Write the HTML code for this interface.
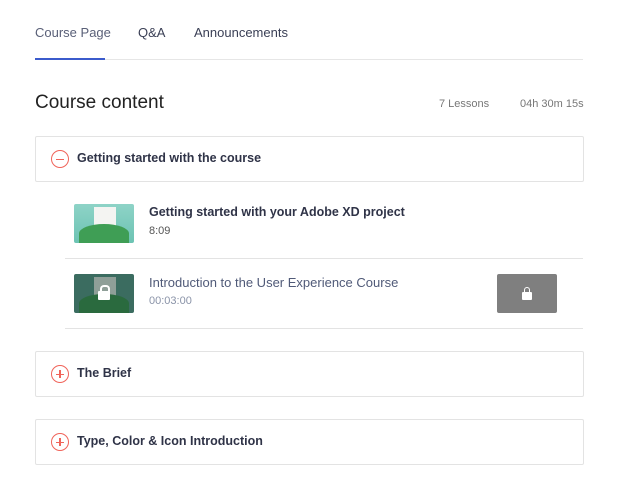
<!DOCTYPE html>
<html><head><style>
body{margin:0;width:643px;height:500px;background:#fff;font-family:"Liberation Sans",sans-serif;position:relative;overflow:hidden}
.a{position:absolute}
.tab{font-size:13px;color:#3a3f55;top:25px}
.box{position:absolute;left:35px;width:547px;height:44px;border:1px solid #e3e3e3;border-radius:2px}
.box .ic{position:absolute;left:15px;top:13px;width:16px;height:16px;border:1px solid #f0645a;border-radius:50%}
.box .ic:before{content:"";position:absolute;left:4px;top:7.5px;width:8px;height:1.2px;background:#f0645a}
.box .ic.p:after{content:"";position:absolute;left:7.4px;top:4px;width:1.2px;height:8px;background:#f0645a}
.box .t{position:absolute;left:41px;top:14px;font-size:12.5px;font-weight:bold;color:#2f3347}
.th{position:absolute;left:74px;width:60px;height:39px;border-radius:2px;overflow:hidden}
.line{position:absolute;left:65px;width:518px;height:1px;background:#e3e3e3}
</style></head><body>
<div class="a tab" style="left:35px;color:#5a6078">Course Page</div>
<div class="a tab" style="left:138px">Q&amp;A</div>
<div class="a tab" style="left:194px">Announcements</div>
<div class="a" style="left:35px;top:59px;width:548px;height:1px;background:#e6e6e6"></div>
<div class="a" style="left:35px;top:58px;width:70px;height:2px;background:#3b5bcc"></div>
<div class="a" style="left:35px;top:92px;font-size:19px;color:#222">Course content</div>
<div class="a" style="left:439px;top:98px;font-size:11px;color:#777">7 Lessons</div>
<div class="a" style="left:520px;top:98px;font-size:11px;color:#777">04h 30m 15s</div>
<div class="box" style="top:136px"><div class="ic"></div><div class="t">Getting started with the course</div></div>
<div class="th" style="top:204px;background:linear-gradient(#8ed3c7,#6cc3b3)"><div class="a" style="left:20px;top:3px;width:22px;height:20px;background:#f4f4f2"></div><div class="a" style="left:5px;top:20px;width:50px;height:19px;background:#3f9e55;border-radius:50% 50% 0 0"></div></div>
<div class="a" style="left:149px;top:205px;font-size:12.5px;font-weight:bold;color:#2f3347">Getting started with your Adobe XD project</div>
<div class="a" style="left:149px;top:225px;font-size:11px;color:#555">8:09</div>
<div class="line" style="top:258px"></div>
<div class="th" style="top:274px;background:#3b6c60"><div class="a" style="left:20px;top:3px;width:22px;height:20px;background:#8f9f98"></div><div class="a" style="left:5px;top:20px;width:50px;height:19px;background:#2a6a3e;border-radius:50% 50% 0 0"></div><div class="a" style="left:24px;top:17px;width:12px;height:9px;background:#fff;border-radius:1px"></div><div class="a" style="left:26px;top:11px;width:6px;height:7px;border:2px solid #fff;border-bottom:none;border-radius:4px 4px 0 0"></div></div>
<div class="a" style="left:149px;top:275px;font-size:13px;color:#505a78">Introduction to the User Experience Course</div>
<div class="a" style="left:149px;top:295px;font-size:11px;color:#8a93a8">00:03:00</div>
<div class="a" style="left:497px;top:274px;width:60px;height:39px;background:#7f7f7f;border-radius:2px"><div class="a" style="left:25px;top:18px;width:10px;height:8px;background:#fff;border-radius:1px"></div><div class="a" style="left:27px;top:13px;width:4px;height:5px;border:1.5px solid #fff;border-bottom:none;border-radius:3px 3px 0 0"></div></div>
<div class="line" style="top:328px"></div>
<div class="box" style="top:351px"><div class="ic p"></div><div class="t">The Brief</div></div>
<div class="box" style="top:419px"><div class="ic p"></div><div class="t">Type, Color &amp; Icon Introduction</div></div>
</body></html>
